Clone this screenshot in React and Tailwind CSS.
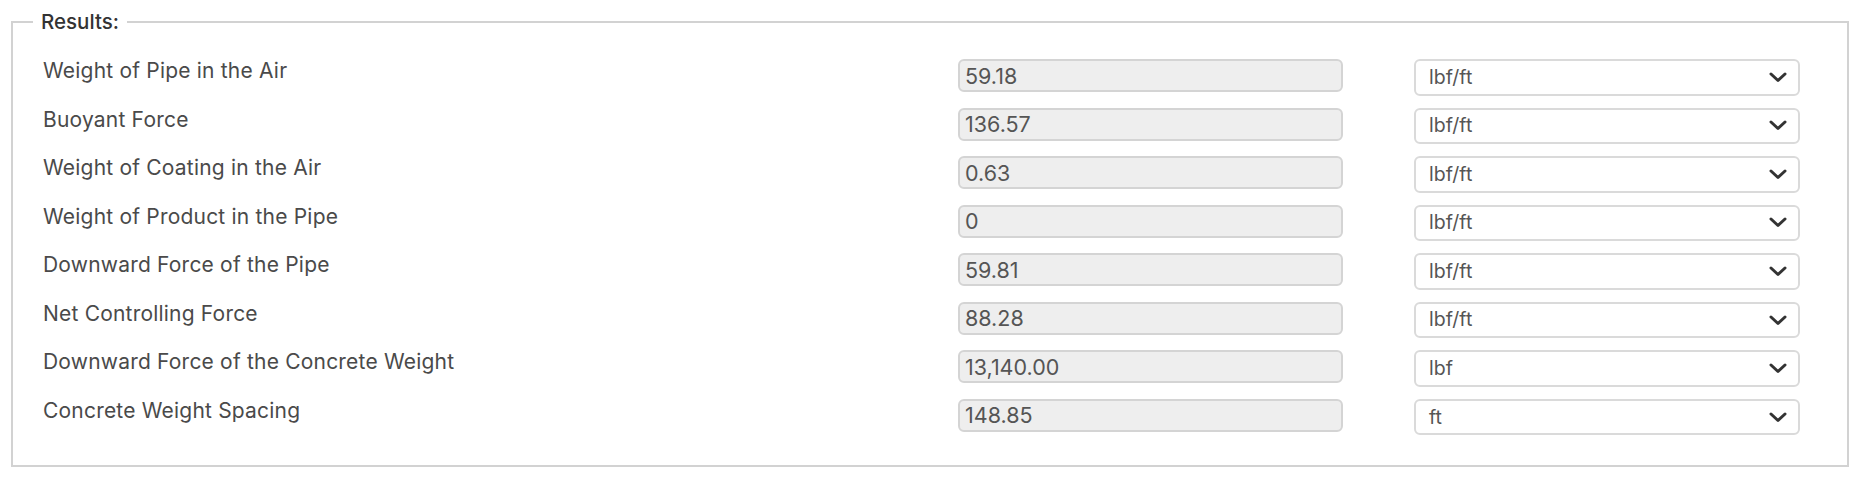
import React from "react";

const rows = [
  ["Weight of Pipe in the Air", "59.18", "lbf/ft"],
  ["Buoyant Force", "136.57", "lbf/ft"],
  ["Weight of Coating in the Air", "0.63", "lbf/ft"],
  ["Weight of Product in the Pipe", "0", "lbf/ft"],
  ["Downward Force of the Pipe", "59.81", "lbf/ft"],
  ["Net Controlling Force", "88.28", "lbf/ft"],
  ["Downward Force of the Concrete Weight", "13,140.00", "lbf"],
  ["Concrete Weight Spacing", "148.85", "ft"],
];

function Chevron() {
  return (
    <svg width="18" height="11" viewBox="0 0 18 11" fill="none" className="shrink-0">
      <polyline points="2,2 9,8.5 16,2" stroke="#333333" strokeWidth="3" strokeLinecap="round" strokeLinejoin="round" />
    </svg>
  );
}

export default function App() {
  return (
    <div className="w-[1858px] h-[478px] bg-white pt-2 pl-[11px] pr-[9px] font-['Inter','Noto_Sans',sans-serif]">
      <fieldset className="border-2 border-[#d2d2d2] pl-[30px] pr-[46px] pt-[23px] pb-[17px] m-0">
        <legend className="ml-[-10px] px-[8px] text-[20.5px] leading-[28px] font-medium text-[#333333]">
          Results:
        </legend>
        <div className="flex flex-col">
          {rows.map(([label, value, unit]) => (
            <div key={label} className="flex items-start h-[48.57px]">
              <div className="w-[915px] text-[21px] tracking-[0.2px] leading-[23px] text-[#4a4a4a]">{label}</div>
              <input
                readOnly
                value={value}
                className="w-[385px] h-[33px] rounded-[6px] border-2 border-[#d4d4d4] bg-[#eeeeee] px-[5px] text-[21.5px] text-[#555555] outline-none"
              />
              <div className="ml-[71px] w-[386px] h-[36.5px] rounded-[6px] border-2 border-[#dadada] bg-white flex items-center justify-between pl-[13px] pr-[11px] text-[19.5px] text-[#555555]">
                <span>{unit}</span>
                <Chevron />
              </div>
            </div>
          ))}
        </div>
      </fieldset>
    </div>
  );
}
